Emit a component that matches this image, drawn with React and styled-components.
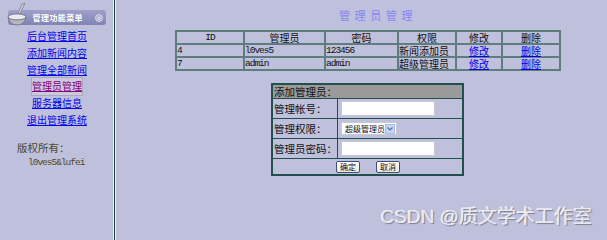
import React from "react";
import styled, { createGlobalStyle } from "styled-components";

const GlobalStyle = createGlobalStyle`
  html, body {
    margin: 0;
    padding: 0;
    background: #bfc0dc;
    overflow: hidden;
  }
  body {
    font-family: "Noto Sans CJK SC", "DejaVu Sans", sans-serif;
    font-size: 10px;
  }
`;

const Page = styled.div`
  display: flex;
  width: 607px;
  height: 240px;
  overflow: hidden;
`;

// 左侧菜单
const Sidebar = styled.div`
  width: 114px;
  flex-shrink: 0;
  height: 240px;
  border-right: 1px solid #1d4a3c;
  box-shadow: inset -1px 0 #eceef6;
  padding-top: 4px;
  box-sizing: content-box;
`;

const MenuHead = styled.div`
  position: relative;
  margin: 6px 8px 0 8px;
  height: 15px;
  border-radius: 3px;
  background: linear-gradient(#9fa1cb, #8184b4);
  display: flex;
  align-items: center;
  justify-content: flex-end;
  padding-right: 3px;
  gap: 12px;
  .title {
    color: #fff;
    font-size: 8px;
    line-height: 15px;
    font-weight: 700;
    letter-spacing: 0.4px;
  }
  svg.logo {
    position: absolute;
    left: -1px;
    top: -8px;
  }
`;

const Menu = styled.div`
  display: flex;
  flex-direction: column;
  align-items: center;
  margin-top: 3px;
  a {
    font-size: 10px;
    line-height: 16.8px;
    color: #0000ee;
    text-decoration: underline;
    white-space: nowrap;
  }
  a.visited {
    color: #800080;
    background: #cdc8de;
    outline: 1px solid #a8a8b8;
  }
`;

const Copyright = styled.div`
  margin: 11px 0 0 17px;
  color: #4e4a2c;
  font-size: 10.5px;
  line-height: 15px;
  .name {
    margin-left: 11px;
    font-family: "Liberation Mono", monospace;
    font-size: 9.5px;
    letter-spacing: -1px;
  }
`;

// 右侧内容
const Main = styled.div`
  flex: 1;
  border-left: 1px solid #eceef6;
  position: relative;
  display: flex;
  flex-direction: column;
  padding-left: 59px;
`;

const Title = styled.div`
  margin: 8px 0 0 164px;
  color: #8585f8;
  font-size: 11px;
  letter-spacing: 4.6px;
  line-height: 14px;
`;

const ListTable = styled.table`
  margin-top: 8px;
  width: 386px;
  border-collapse: collapse;
  border: 2px solid #5f7c7e;
  th, td {
    border: 2px solid #5f7c7e;
    padding: 0;
    height: 11px;
    font-size: 10px;
    line-height: 11px;
    font-weight: 400;
    color: #111;
    white-space: nowrap;
  }
  th { text-align: center; }
  td { text-align: left; }
  th.mono, td.mono {
    font-family: "Liberation Mono", monospace;
    font-size: 9.5px;
    letter-spacing: -1px;
  }
  td.link { text-align: center; }
  a { color: #0000ee; text-decoration: underline; }
`;

const FormTable = styled.table`
  margin: 12px 0 0 96px;
  width: 193px;
  border-collapse: collapse;
  border: 2px solid #23504e;
  td {
    border: 1px solid #23504e;
    padding: 0 0 0 1px;
    font-size: 10.5px;
    line-height: 12px;
    color: #111;
    white-space: nowrap;
  }
  td.head {
    background: #9a9a9a;
    height: 13px;
    line-height: 13px;
  }
  td.label { width: 63px; height: 19px; }
  td.btns { height: 15px; text-align: center; }
`;

const TextBox = styled.input`
  width: 92px;
  height: 13px;
  margin: 0 0 0 2px;
  padding: 0;
  border: 1px solid #c8c8d4;
  background: #fff;
  display: block;
`;

const SelectBox = styled.div`
  display: inline-flex;
  align-items: center;
  margin-left: 2px;
  height: 13px;
  width: 56px;
  background: #fff;
  border: 1px solid #c8c8d4;
  font-size: 8px;
  padding-left: 3px;
  box-sizing: border-box;
  justify-content: space-between;
  vertical-align: middle;
  .arrow {
    width: 10px;
    height: 10px;
    margin-right: 1px;
    background: #c8d6f6;
    border: 1px solid #a7b9e6;
    box-sizing: border-box;
    display: flex;
    align-items: center;
    justify-content: center;
  }
`;

const Button = styled.button`
  font-family: "Noto Sans CJK SC", sans-serif;
  font-size: 8px;
  height: 12px;
  line-height: 10px;
  padding: 0 3px;
  margin: 0 8px;
  border: 1px solid #3a5078;
  border-radius: 2px;
  background: linear-gradient(#ffffff, #e8e8e0);
  color: #111;
`;

const Watermark = styled.div`
  position: absolute;
  right: 15px;
  bottom: 12px;
  font-family: "Liberation Sans", "Noto Sans CJK SC", sans-serif;
  font-size: 19px;
  line-height: 22px;
  color: #e9e9f2;
  text-shadow: 1px 1px 1px #7c7c8a, -0.5px -0.5px 0 #ffffff;
`;

const Logo = () => (
  <svg className="logo" width="22" height="24" viewBox="0 0 22 24">
    <path d="M15 2 L18 1 L13 12 L11 11 Z" fill="#c9c9d2" stroke="#6e6e80" strokeWidth="0.6" />
    <ellipse cx="10" cy="15" rx="9" ry="3" fill="#e9e9ef" stroke="#6c6c7e" strokeWidth="0.7" />
    <path d="M1 15 Q3 23 10 23 Q17 23 19 15 Q17 18 10 18 Q3 18 1 15 Z" fill="#b7b7c4" stroke="#6c6c7e" strokeWidth="0.7" />
  </svg>
);

const Chevron = () => (
  <svg width="8" height="8" viewBox="0 0 8 8">
    <circle cx="4" cy="4" r="3.5" fill="#a9abd0" stroke="#e8e8f4" strokeWidth="0.8" />
    <path d="M2.4 2.6 L4 4 L5.6 2.6 M2.4 4.4 L4 5.8 L5.6 4.4" fill="none" stroke="#fff" strokeWidth="0.8" />
  </svg>
);

const menuItems = ["后台管理首页", "添加新闻内容", "管理全部新闻", "管理员管理", "服务器信息", "退出管理系统"];

const admins = [
  { id: 4, name: "l0ves5", pwd: "123456", role: "新闻添加员" },
  { id: 7, name: "admin", pwd: "admin", role: "超级管理员" },
];

export default function App() {
  return (
    <Page>
      <GlobalStyle />
      <Sidebar>
        <MenuHead>
          <Logo />
          <span className="title">管理功能菜单</span>
          <Chevron />
        </MenuHead>
        <Menu>
          {menuItems.map((m) => (
            <a key={m} href="#" className={m === "管理员管理" ? "visited" : ""}>{m}</a>
          ))}
        </Menu>
        <Copyright>
          <div>版权所有：</div>
          <div className="name">l0ves5&amp;lufei</div>
        </Copyright>
      </Sidebar>
      <Main>
        <Title>管理员管理</Title>
        <ListTable>
          <thead>
            <tr>
              <th className="mono" style={{ width: 66 }}>ID</th>
              <th style={{ width: 79 }}>管理员</th>
              <th style={{ width: 71 }}>密码</th>
              <th style={{ width: 56 }}>权限</th>
              <th style={{ width: 44 }}>修改</th>
              <th>删除</th>
            </tr>
          </thead>
          <tbody>
            {admins.map((a) => (
              <tr key={a.id}>
                <td className="mono">{a.id}</td>
                <td className="mono">{a.name}</td>
                <td className="mono">{a.pwd}</td>
                <td>{a.role}</td>
                <td className="link"><a href="#">修改</a></td>
                <td className="link"><a href="#">删除</a></td>
              </tr>
            ))}
          </tbody>
        </ListTable>
        <FormTable>
          <tbody>
            <tr><td className="head" colSpan={2}>添加管理员：</td></tr>
            <tr>
              <td className="label">管理帐号：</td>
              <td><TextBox /></td>
            </tr>
            <tr>
              <td className="label">管理权限：</td>
              <td>
                <SelectBox>
                  超级管理员
                  <span className="arrow">
                    <svg width="6" height="4" viewBox="0 0 6 4"><path d="M0.5 0.5 L3 3 L5.5 0.5" fill="none" stroke="#4d6fb8" strokeWidth="1.2" /></svg>
                  </span>
                </SelectBox>
              </td>
            </tr>
            <tr>
              <td className="label">管理员密码：</td>
              <td><TextBox type="password" /></td>
            </tr>
            <tr>
              <td className="btns" colSpan={2}>
                <Button>确定</Button>
                <Button>取消</Button>
              </td>
            </tr>
          </tbody>
        </FormTable>
        <Watermark>CSDN @质文学术工作室</Watermark>
      </Main>
    </Page>
  );
}
